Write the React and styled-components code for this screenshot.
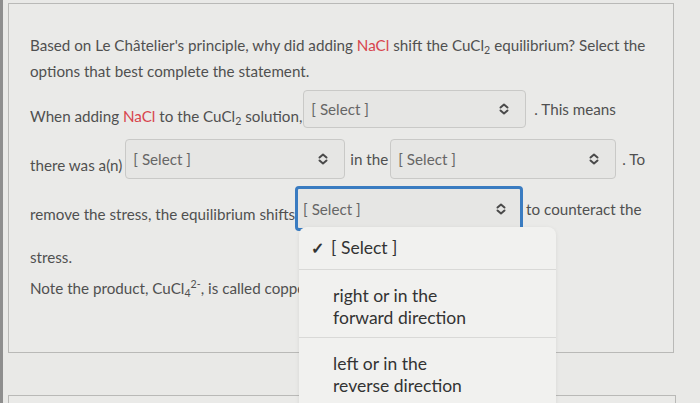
import React from "react";
import styled, { createGlobalStyle } from "styled-components";

const Global = createGlobalStyle`
  html, body { margin: 0; padding: 0; background: #e9e9e7; }
  body { font-family: Lato, "Open Sans", "Liberation Sans", sans-serif; overflow: hidden; }
`;

const Frame = styled.div`
  width: 700px;
  height: 403px;
  box-sizing: border-box;
  border-left: 3px solid #8e8e8e;
  padding: 3px 0 0 5px;
  background: #e9e9e7;
  overflow: hidden;
`;

const Card = styled.div`
  width: 666px;
  height: 350px;
  box-sizing: border-box;
  border: 1px solid #b9b9b7;
  background: #eaeae8;
  padding: 29px 0 0 21px;
  color: #505050;
  font-size: 15.2px;
`;

const NextCard = styled.div`
  width: 666px;
  height: 20px;
  margin-top: 42px;
  border: 1px solid #b9b9b7;
  border-bottom: none;
  background: #eaeae8;
`;

const Intro = styled.p`
  margin: 0;
  line-height: 25px;
  width: 640px;
`;

const Red = styled.span`
  color: #d8454d;
`;

const Sub = styled.span`
  display: inline-block;
  font-size: 0.7em;
  transform: translateY(0.3em);
`;

const Sup = styled.span`
  display: inline-block;
  font-size: 0.7em;
  transform: translateY(-0.6em);
`;

const Line = styled.div`
  display: flex;
  align-items: center;
  margin-top: ${(p) => p.$mt}px;
  height: ${(p) => p.$h || 25}px;
  white-space: nowrap;
`;

const Text = styled.span`
  padding-top: ${(p) => p.$drop || 0}px;
  margin-right: ${(p) => p.$mr || 0}px;
  margin-left: ${(p) => p.$ml || 0}px;
`;

const SelectWrap = styled.div`
  position: relative;
  flex: none;
`;

const SelectBox = styled.div`
  width: ${(p) => p.$w}px;
  height: ${(p) => p.$h}px;
  box-sizing: border-box;
  border: ${(p) => (p.$focus ? "3px solid #3a7cc1" : "1px solid #c9c9c7")};
  border-radius: 4px;
  background: #e6e6e4;
  display: flex;
  align-items: center;
  justify-content: space-between;
  padding: ${(p) => (p.$focus ? "0 14px 0 5px" : "0 16px 0 7px")};
  color: #666;
  font-size: 15.2px;
`;

const Chevrons = () => (
  <svg width="10" height="12" viewBox="0 0 10 12" fill="none" stroke="#4a4a4a" strokeWidth="2" strokeLinecap="round" strokeLinejoin="round">
    <path d="M1.5 4.5 L5 1.5 L8.5 4.5" />
    <path d="M1.5 7.5 L5 10.5 L8.5 7.5" />
  </svg>
);

const Select = ({ w, h, focus, children }) => (
  <SelectWrap>
    <SelectBox $w={w} $h={h} $focus={focus}>
      <span>[ Select ]</span>
      <Chevrons />
    </SelectBox>
    {children}
  </SelectWrap>
);

const Menu = styled.div`
  position: absolute;
  left: 4px;
  top: 41px;
  width: 257px;
  background: #f1f1ef;
  border-radius: 8px;
  box-shadow: 0 1px 4px rgba(0, 0, 0, 0.08);
  color: #333;
  font-size: 17.5px;
  z-index: 2;
  overflow: hidden;
`;

const Item = styled.div`
  display: flex;
  align-items: ${(p) => (p.$checked ? "center" : "flex-start")};
  box-sizing: border-box;
  height: ${(p) => p.$h}px;
  padding: ${(p) => (p.$checked ? "0 0 0 12px" : "15px 0 0 34px")};
  line-height: 22px;
  white-space: normal;
  border-top: ${(p) => (p.$first ? "none" : "1px solid #d9d9d7")};
`;

const Check = styled.span`
  width: 20px;
  font-size: 16px;
  font-weight: bold;
`;

const OptionText = styled.span`
  width: 140px;
`;

export default function App() {
  return (
    <>
      <Global />
      <Frame>
        <Card>
          <Intro>
            Based on Le Châtelier's principle, why did adding <Red>NaCl</Red> shift the CuCl<Sub>2</Sub> equilibrium? Select the options that best complete the statement.
          </Intro>
          <Line $mt={6} $h={38}>
            <Text $drop={14} $mr={1}>
              When adding <Red>NaCl</Red> to the CuCl<Sub>2</Sub> solution,
            </Text>
            <Select w={223} h={38} />
            <Text $ml={8}>. This means</Text>
          </Line>
          <Line $mt={10} $h={42}>
            <Text $drop={12} $mr={3}>there was a(n)</Text>
            <Select w={220} h={40} />
            <Text $ml={5} $mr={2}>in the</Text>
            <Select w={226} h={40} />
            <Text $ml={6}>. To</Text>
          </Line>
          <Line $mt={6} $h={45}>
            <Text $drop={10}>remove the stress, the equilibrium shifts</Text>
            <Select w={228} h={45} focus>
              <Menu>
                <Item $first $checked $h={42}>
                  <Check>✓</Check>
                  <span>[ Select ]</span>
                </Item>
                <Item $h={68}>
                  <OptionText>right or in the forward direction</OptionText>
                </Item>
                <Item $h={80}>
                  <OptionText>left or in the reverse direction</OptionText>
                </Item>
              </Menu>
            </Select>
            <Text $ml={3}>to counteract the</Text>
          </Line>
          <Line $mt={13}>
            <Text>stress.</Text>
          </Line>
          <Line $mt={6}>
            <Text>
              Note the product, CuCl<Sub>4</Sub>
              <Sup>2-</Sup>, is called copper chloride.
            </Text>
          </Line>
        </Card>
        <NextCard />
      </Frame>
    </>
  );
}
